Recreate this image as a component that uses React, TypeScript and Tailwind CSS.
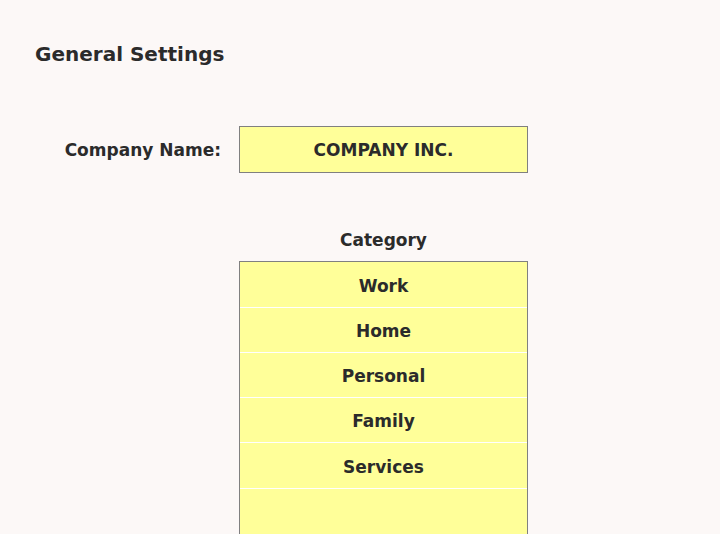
export default function App() {
  const items = [
    { t: "Work", h: "h-[46px]" },
    { t: "Home", h: "h-[45px]" },
    { t: "Personal", h: "h-[45px]" },
    { t: "Family", h: "h-[45px]" },
    { t: "Services", h: "h-[46px]" },
    { t: "", h: "h-[60px]" },
  ];
  return (
    <div
      className="w-[720px] h-[534px] overflow-hidden bg-[#fcf8f7] text-[#2b2b2b] font-bold"
      style={{ fontFamily: '"DejaVu Sans", Verdana, sans-serif' }}
    >
      <h1 className="pl-[35px] pt-[40px] text-[20px] leading-[28px]">General Settings</h1>
      <div className="flex items-center mt-[58px]">
        <div className="w-[239px] pr-[18px] pt-[2px] text-right text-[17px]">Company Name:</div>
        <div className="w-[289px] h-[47px] pt-[2px] border border-[#808080] bg-[#ffff99] flex items-center justify-center text-[17px]">
          COMPANY INC.
        </div>
      </div>
      <div className="ml-[239px] w-[289px]">
        <div className="mt-[54px] h-[34px] text-center text-[17px] leading-[26px]">Category</div>
        <div className="border-t border-l border-r border-[#808080] bg-[#ffff99]">
          {items.map((it, i) => (
            <div
              key={i}
              className={`${it.h} pt-[4px] flex items-center justify-center text-[17px] ${i < items.length - 1 ? "border-b border-white" : ""}`}
            >
              {it.t}
            </div>
          ))}
        </div>
      </div>
    </div>
  );
}
